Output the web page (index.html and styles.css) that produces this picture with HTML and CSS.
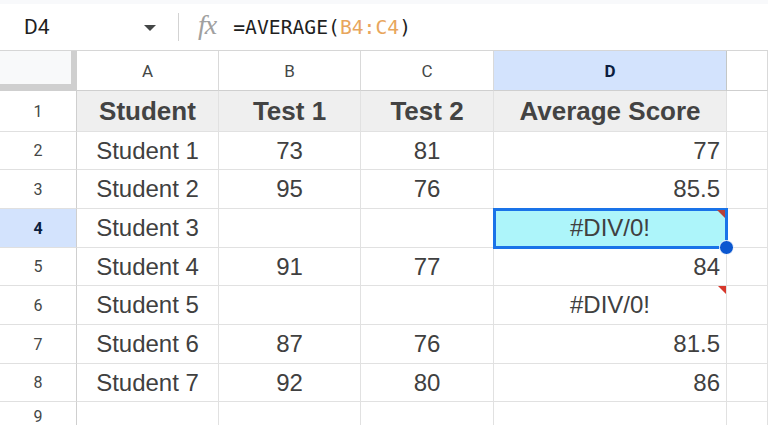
FILE: index.html
```html
<!DOCTYPE html>
<html>
<head>
<meta charset="utf-8">
<link rel="stylesheet" href="styles.css">
</head>
<body>
<div class="topstrip"></div>
<div class="toolbar">
  <div class="namebox">D4</div>
  <div class="caret"></div>
  <div class="sep"></div>
  <div class="fx">fx</div>
  <div class="formula">=AVERAGE(<span class="ref">B4:C4</span>)</div>
</div>
<div class="sheet">
  <div class="corner"></div>
  <div class="colhead">A</div>
  <div class="colhead">B</div>
  <div class="colhead">C</div>
  <div class="colhead sel">D</div>
  <div class="colhead"></div>

  <div class="rowhead">1</div>
  <div class="cell hdr">Student</div>
  <div class="cell hdr">Test 1</div>
  <div class="cell hdr">Test 2</div>
  <div class="cell hdr">Average Score</div>
  <div class="cell"></div>

  <div class="rowhead">2</div>
  <div class="cell">Student 1</div>
  <div class="cell">73</div>
  <div class="cell">81</div>
  <div class="cell num">77</div>
  <div class="cell"></div>

  <div class="rowhead">3</div>
  <div class="cell">Student 2</div>
  <div class="cell">95</div>
  <div class="cell">76</div>
  <div class="cell num">85.5</div>
  <div class="cell"></div>

  <div class="rowhead sel">4</div>
  <div class="cell">Student 3</div>
  <div class="cell"></div>
  <div class="cell"></div>
  <div class="cell active err">#DIV/0!<span class="handle"></span></div>
  <div class="cell"></div>

  <div class="rowhead">5</div>
  <div class="cell">Student 4</div>
  <div class="cell">91</div>
  <div class="cell">77</div>
  <div class="cell num">84</div>
  <div class="cell"></div>

  <div class="rowhead">6</div>
  <div class="cell">Student 5</div>
  <div class="cell"></div>
  <div class="cell"></div>
  <div class="cell err">#DIV/0!</div>
  <div class="cell"></div>

  <div class="rowhead">7</div>
  <div class="cell">Student 6</div>
  <div class="cell">87</div>
  <div class="cell">76</div>
  <div class="cell num">81.5</div>
  <div class="cell"></div>

  <div class="rowhead">8</div>
  <div class="cell">Student 7</div>
  <div class="cell">92</div>
  <div class="cell">80</div>
  <div class="cell num">86</div>
  <div class="cell"></div>

  <div class="rowhead">9</div>
  <div class="cell"></div>
  <div class="cell"></div>
  <div class="cell"></div>
  <div class="cell"></div>
  <div class="cell"></div>
</div>
</body>
</html>
```
FILE: styles.css
```css
* { box-sizing: border-box; }
html, body { margin: 0; padding: 0; background: #fff; overflow: hidden; }
body { width: 768px; height: 425px; font-family: "Liberation Sans", Arial, sans-serif; }

.topstrip { height: 4px; background: #f8f9fb; }
.toolbar {
  height: 47px;
  display: flex;
  align-items: center;
  border-bottom: 1px solid #d6d6d6;
}
.namebox {
  width: 118px;
  padding-left: 24px;
  font-size: 21px;
  color: #1f1f1f;
  font-family: "Roboto", "Liberation Sans", sans-serif;
}
.caret {
  width: 0; height: 0;
  border-left: 6px solid transparent;
  border-right: 6px solid transparent;
  border-top: 6px solid #444746;
  margin-left: 26px;
  margin-top: 1px;
}
.sep {
  width: 1px;
  height: 28px;
  background: #d3d3d3;
  margin-left: 22px;
}
.fx {
  margin-left: 19px;
  font-family: "Liberation Serif", serif;
  font-style: italic;
  font-size: 28px;
  color: #a0a0a0;
  letter-spacing: -1px;
  margin-top: -4px;
}
.formula {
  margin-left: 17px;
  font-family: "DejaVu Sans Mono", "Liberation Mono", monospace;
  font-size: 19.7px;
  color: #1f1f1f;
}
.ref { color: #e8a65c; }

.sheet {
  display: grid;
  grid-template-columns: 77px 142px 142px 133px 233px 41px;
  grid-template-rows: 40px 41px 38px 39px 39px 38px 39px 39px 38px 30px;
}
.corner {
  background: #f8f9fa;
  border-right: 6px solid #cfcfcf;
  border-bottom: 7px solid #cfcfcf;
}
.colhead {
  display: flex;
  align-items: center;
  justify-content: center;
  font-family: "Roboto", "Liberation Sans", sans-serif;
  font-size: 17px;
  color: #444746;
  border-right: 1px solid #d9d9d9;
  border-bottom: 1px solid #cfcfcf;
  background: #fff;
}
.colhead.sel { background: #d3e3fd; color: #0b1e3f; font-weight: bold; border-right-color: #c4c7c5; }
.rowhead {
  display: flex;
  align-items: center;
  justify-content: center;
  font-family: "Roboto", "Liberation Sans", sans-serif;
  font-size: 16px;
  color: #444746;
  border-right: 1px solid #cfcfcf;
  border-bottom: 1px solid #e0e0e0;
  background: #fff;
}
.rowhead.sel { background: #d3e3fd; color: #0b1e3f; font-weight: bold; }
.cell {
  position: relative;
  display: flex;
  align-items: center;
  justify-content: center;
  font-size: 24px;
  color: #404040;
  border-right: 1px solid #e1e1e1;
  border-bottom: 1px solid #e1e1e1;
  padding: 0 6px;
  white-space: nowrap;
}
.cell.hdr { background: #efefef; font-weight: bold; font-size: 26px; color: #434343; }
.cell.num { justify-content: flex-end; padding-right: 6px; }
.cell.err::after {
  content: "";
  position: absolute;
  top: 0; right: 0;
  border-top: 8px solid #d7372b;
  border-left: 8px solid transparent;
}
.cell.active {
  background: #adf5fa;
  outline: 3px solid #1a73e8;
  outline-offset: -2px;
  z-index: 2;
}
.cell.active::after { border-top-color: #b8413a; right: 1px; top: 1px; }
.handle {
  position: absolute;
  right: -8px;
  bottom: -8px;
  width: 15px;
  height: 15px;
  border-radius: 50%;
  background: #0b57d0;
  border: 1px solid #fff;
  z-index: 3;
}
```
